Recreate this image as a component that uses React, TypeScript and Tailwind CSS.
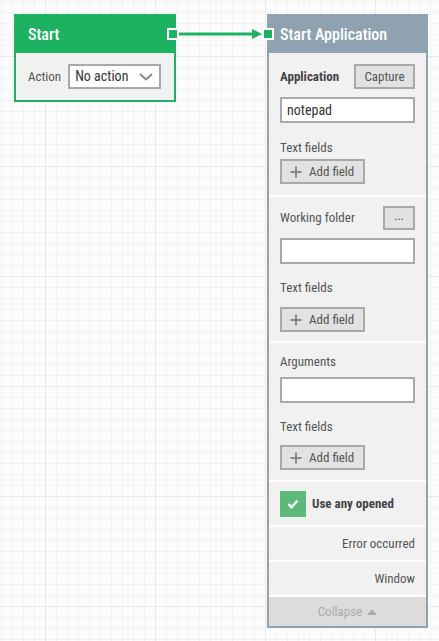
import React from "react";

function AddField() {
  return (
    <button className="flex h-[25px] w-[85px] items-center gap-[7px] border-2 border-[#a9a9a9] bg-[#e2e2e2] pl-[8px] text-[13px] text-[#555]">
      <svg width="12" height="12" viewBox="0 0 12 12" className="shrink-0">
        <path d="M6 0.5V11.5M0.5 6H11.5" stroke="#8a8a8a" strokeWidth="2" />
      </svg>
      <span>Add field</span>
    </button>
  );
}

function Input({ value }: { value?: string }) {
  return (
    <div className="flex h-[26px] w-full items-center border-2 border-[#a9a9a9] bg-white px-[5px] text-[14px] text-[#333]">
      {value}
    </div>
  );
}

export default function App() {
  return (
    <div className="relative h-[641px] w-[439px] overflow-hidden bg-[#fcfcfc] font-['Roboto_Condensed','Roboto',sans-serif] [font-stretch:condensed] [background-image:linear-gradient(to_right,#e9e9e9_1px,transparent_1px),linear-gradient(to_bottom,#e9e9e9_1px,transparent_1px),linear-gradient(to_right,#f2f2f2_1px,transparent_1px),linear-gradient(to_bottom,#f2f2f2_1px,transparent_1px)] [background-size:110px_110px,110px_110px,11px_11px,11px_11px] [background-position:45px_56px,45px_56px,1px_1px,1px_1px]">
      {/* Start node */}
      <div className="absolute left-[14px] top-[14px] w-[162px] border-2 border-[#1db262] bg-[#f1f1f1]">
        <div className="flex h-[37px] items-center bg-[#1db262] pl-[12px] text-[16px] font-medium text-white">
          Start
        </div>
        <div className="flex h-[47px] items-center pl-[12px] text-[13px] text-[#555]">
          <span>Action</span>
          <div className="ml-[7px] flex h-[25px] w-[93px] items-center justify-between border-2 border-[#a9a9a9] bg-white pl-[5px] pr-[6px] text-[14px] text-[#333]">
            <span>No action</span>
            <svg width="14" height="8" viewBox="0 0 14 8">
              <path d="M1 1L7 6.5L13 1" stroke="#888" strokeWidth="2" fill="none" />
            </svg>
          </div>
        </div>
      </div>

      {/* Start Application node */}
      <div className="absolute left-[267px] top-[14px] w-[161px] border-2 border-[#8ea2b1] bg-[#f1f1f1]">
        <div className="flex h-[37px] items-center bg-[#8ea2b1] pl-[11px] text-[16px] font-medium text-white">
          Start Application
        </div>
        {/* Section 1 */}
        <div className="flex flex-col px-[11px] pt-[11px] pb-[11px]">
          <div className="flex h-[25px] items-center justify-between">
            <span className="text-[13px] font-bold text-[#444]">Application</span>
            <button className="flex h-[25px] w-[61px] items-center justify-center border-2 border-[#a9a9a9] bg-[#e2e2e2] text-[13px] text-[#555]">
              Capture
            </button>
          </div>
          <div className="mt-[8px]">
            <Input value="notepad" />
          </div>
          <div className="mt-[17px] text-[13px] leading-[16px] text-[#555]">Text fields</div>
          <div className="mt-[3px]">
            <AddField />
          </div>
        </div>
        <div className="h-[2px] bg-white" />
        {/* Section 2 */}
        <div className="flex flex-col px-[11px] pt-[9px] pb-[9px]">
          <div className="flex h-[24px] items-center justify-between">
            <span className="text-[13px] text-[#555]">Working folder</span>
            <button className="flex h-[24px] w-[32px] items-center justify-center border-2 border-[#a9a9a9] bg-[#e2e2e2] pb-[4px] text-[12px] text-[#555]">
              ...
            </button>
          </div>
          <div className="mt-[8px]">
            <Input />
          </div>
          <div className="mt-[16px] text-[13px] leading-[16px] text-[#555]">Text fields</div>
          <div className="mt-[11px]">
            <AddField />
          </div>
        </div>
        <div className="h-[2px] bg-white" />
        {/* Section 3 */}
        <div className="flex flex-col px-[11px] pt-[11px] pb-[10px]">
          <div className="text-[13px] leading-[16px] text-[#555]">Arguments</div>
          <div className="mt-[7px]">
            <Input />
          </div>
          <div className="mt-[16px] text-[13px] leading-[16px] text-[#555]">Text fields</div>
          <div className="mt-[10px]">
            <AddField />
          </div>
        </div>
        <div className="h-[2px] bg-white" />
        {/* Section 4 */}
        <div className="flex h-[43px] items-center gap-[6px] px-[11px]">
          <div className="flex h-[26px] w-[26px] items-center justify-center bg-[#5cb87b]">
            <svg width="12" height="10" viewBox="0 0 12 10">
              <path d="M1.5 5.2L4.5 8.2L10.5 1.5" stroke="white" strokeWidth="2.4" fill="none" />
            </svg>
          </div>
          <span className="text-[13px] font-bold text-[#444]">Use any opened</span>
        </div>
        <div className="h-[2px] bg-white" />
        <div className="flex h-[33px] items-center justify-end px-[11px] text-[13px] text-[#555]">
          Error occurred
        </div>
        <div className="h-[2px] bg-white" />
        <div className="flex h-[33px] items-center justify-end px-[11px] text-[13px] text-[#555]">
          Window
        </div>
        <div className="h-[2px] bg-white" />
        <div className="flex h-[29px] items-center justify-center gap-[5px] bg-[#dcdcdc] text-[13px] text-[#aaa]">
          <span>Collapse</span>
          <svg width="10" height="6" viewBox="0 0 10 6">
            <path d="M0 6L5 0.5L10 6Z" fill="#aaa" />
          </svg>
        </div>
      </div>

      {/* Connector */}
      <svg className="absolute left-0 top-0" width="439" height="641">
        <rect x="168" y="29" width="10" height="10" fill="#1db262" stroke="white" strokeWidth="2" />
        <line x1="179" y1="34" x2="255" y2="34" stroke="#1db262" strokeWidth="3" />
        <path d="M252 29L262 34L252 39Z" fill="#1db262" />
        <rect x="263" y="29" width="10" height="10" fill="#1db262" stroke="white" strokeWidth="2" />
      </svg>
    </div>
  );
}
